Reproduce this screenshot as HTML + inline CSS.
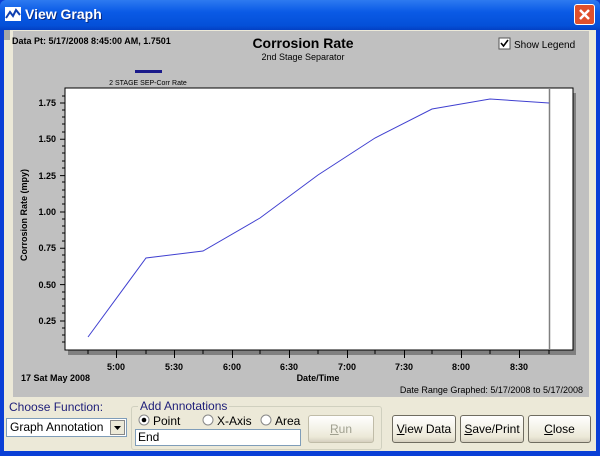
<!DOCTYPE html>
<html><head><style>
body{margin:0;width:600px;height:456px;overflow:hidden;font-family:"Liberation Sans",Arial,sans-serif;}
.win{position:absolute;left:0;top:0;width:600px;height:456px;background:#0a3fd6;}
.title{position:absolute;left:0;top:0;width:600px;height:30px;background:linear-gradient(#2d7af0,#0a5ae6 40%,#0450d8 85%,#0340c4);border-radius:6px 6px 0 0;}
.title span{position:absolute;left:25px;top:6px;color:#fff;font-weight:bold;font-size:14px;text-shadow:1px 1px #0a2a80;}
.close{position:absolute;left:574px;top:4px;width:21px;height:21px;background:#e0502c;border:1px solid #fff;border-radius:3px;box-sizing:border-box;}
.client{position:absolute;left:4px;top:30px;width:592px;height:421px;background:#ECE9D8;}
.panel{position:absolute;left:9px;top:1px;width:576px;height:366px;background:#c0c0c0;}
.lbl{position:absolute;font-size:12px;color:#20207a;}
.btn{position:absolute;top:385px;height:28px;box-sizing:border-box;border:1px solid #6f6c60;border-radius:3px;background:linear-gradient(#fff,#ece9d8 80%,#d6d0c0);font-size:12px;text-align:center;line-height:26px;color:#000;}
u{text-decoration:underline}
</style></head><body>
<div class="win">
<div class="title">
<svg style="position:absolute;left:5px;top:7px" width="16" height="14"><rect x="0" y="0" width="16" height="14" fill="#fff"/><polyline points="1,11 5,5 8,9 11,3 15,8" fill="none" stroke="#1040b0" stroke-width="2"/></svg>
<span>View Graph</span>
<div class="close"><svg width="19" height="19"><path d="M5 5L14 14M14 5L5 14" stroke="#fff" stroke-width="2.5"/></svg></div>
</div>
<div class="client">
<div class="panel"></div>
<div style="position:absolute;left:0;top:0;width:6px;height:10px;background:#a8a8a8"></div>
<svg style="position:absolute;left:-4px;top:-30px" width="600" height="456" font-family="Liberation Sans,Arial,sans-serif">
<text x="12" y="44" font-size="9" font-weight="bold">Data Pt: 5/17/2008 8:45:00 AM, 1.7501</text>
<text x="303" y="48" font-size="14" font-weight="bold" text-anchor="middle">Corrosion Rate</text>
<text x="303" y="60" font-size="9" text-anchor="middle">2nd Stage Separator</text>
<rect x="499" y="38" width="11" height="11" fill="#fff" stroke="#555"/>
<path d="M501 43l2.5 3 4.5-6" fill="none" stroke="#000" stroke-width="1.6"/>
<text x="514" y="48" font-size="10">Show Legend</text>
<rect x="135" y="70" width="27" height="3" fill="#1a1a8a"/>
<text x="148" y="85" font-size="7" text-anchor="middle">2 STAGE SEP-Corr Rate</text>
<rect x="68" y="93" width="508" height="262" fill="#808080"/>
<rect x="65" y="88" width="508" height="262" fill="#fff" stroke="#000" stroke-width="1"/>
<line x1="549.5" y1="88" x2="549.5" y2="350" stroke="#808080" stroke-width="1.5"/>
<polyline points="88,337 146,258 203,251 260,218 318,175 375,138 432,109 490,99 549,103" fill="none" stroke="#4040d0" stroke-width="1"/>
<g stroke="#000" stroke-width="1">
<path d="M60 103H65M60 139.3H65M60 175.6H65M60 212H65M60 248.3H65M60 284.6H65M60 321H65"/>
<path d="M62 110H65M62 117H65M62 124H65M62 132H65M62 146H65M62 153H65M62 161H65M62 168H65M62 182H65M62 190H65M62 197H65M62 204H65M62 219H65M62 226H65M62 233H65M62 241H65M62 255H65M62 262H65M62 270H65M62 277H65M62 292H65M62 299H65M62 306H65M62 313H65M62 328H65M62 335H65M62 342H65M62 96H65"/>
<path d="M116.5 350V358M174.5 350V358M232.5 350V358M289.5 350V358M347.5 350V358M404.5 350V358M461.5 350V358M519.5 350V358"/>
<path d="M88 350V354M146 350V354M203 350V354M260 350V354M318 350V354M375 350V354M432 350V354M490 350V354M549 350V354"/>
</g>
<g font-size="9" font-weight="bold" text-anchor="end">
<text x="56" y="106">1.75</text><text x="56" y="142">1.50</text><text x="56" y="179">1.25</text><text x="56" y="215">1.00</text><text x="56" y="251">0.75</text><text x="56" y="288">0.50</text><text x="56" y="324">0.25</text>
</g>
<text transform="translate(27,215) rotate(-90)" font-size="9" font-weight="bold" text-anchor="middle">Corrosion Rate (mpy)</text>
<g font-size="9" font-weight="bold" text-anchor="middle">
<text x="116" y="370">5:00</text><text x="174" y="370">5:30</text><text x="232" y="370">6:00</text><text x="289" y="370">6:30</text><text x="347" y="370">7:00</text><text x="404" y="370">7:30</text><text x="461" y="370">8:00</text><text x="519" y="370">8:30</text>
<text x="318" y="381">Date/Time</text>
</g>
<text x="21" y="381" font-size="9" font-weight="bold">17 Sat May 2008</text>
<text x="583" y="393" font-size="9" text-anchor="end">Date Range Graphed: 5/17/2008 to 5/17/2008</text>
</svg>
<div class="lbl" style="left:5px;top:370px">Choose Function:</div>
<div style="position:absolute;left:2px;top:388px;width:121px;height:19px;background:#fff;border:1px solid #7f9db9;box-sizing:border-box;font-size:12px;line-height:17px;padding-left:3px">Graph Annotation
<div style="position:absolute;right:1px;top:1px;width:15px;height:15px;background:#ece9d8;border:1px solid #888;box-sizing:border-box"><svg width="13" height="13"><path d="M3 5h7l-3.5 4z" fill="#000"/></svg></div></div>
<div style="position:absolute;left:127px;top:376px;width:249px;height:42px;border:1px solid #d0d0bf;border-radius:3px"></div>
<div class="lbl" style="left:134px;top:369px;background:#ECE9D8;padding:0 2px">Add Annotations</div>
<svg style="position:absolute;left:134px;top:384px" width="170" height="13" font-family="Liberation Sans,Arial,sans-serif" font-size="12">
<circle cx="6" cy="6" r="5" fill="#fff" stroke="#888"/><circle cx="6" cy="6" r="2.3" fill="#000"/><text x="15" y="11">Point</text>
<circle cx="70" cy="6" r="5" fill="#fff" stroke="#888"/><text x="79" y="11">X-Axis</text>
<circle cx="128" cy="6" r="5" fill="#fff" stroke="#888"/><text x="137" y="11">Area</text>
</svg>
<div style="position:absolute;left:131px;top:399px;width:166px;height:17px;background:#fff;border:1px solid #7f9db9;box-sizing:border-box;font-size:12px;line-height:15px;padding-left:2px">End</div>
<div class="btn" style="left:304px;width:66px;color:#a0a090;border-color:#c0bca8"><u>R</u>un</div>
<div class="btn" style="left:388px;width:64px"><u>V</u>iew Data</div>
<div class="btn" style="left:456px;width:64px"><u>S</u>ave/Print</div>
<div class="btn" style="left:524px;width:63px"><u>C</u>lose</div>
</div>
</div>
</body></html>
